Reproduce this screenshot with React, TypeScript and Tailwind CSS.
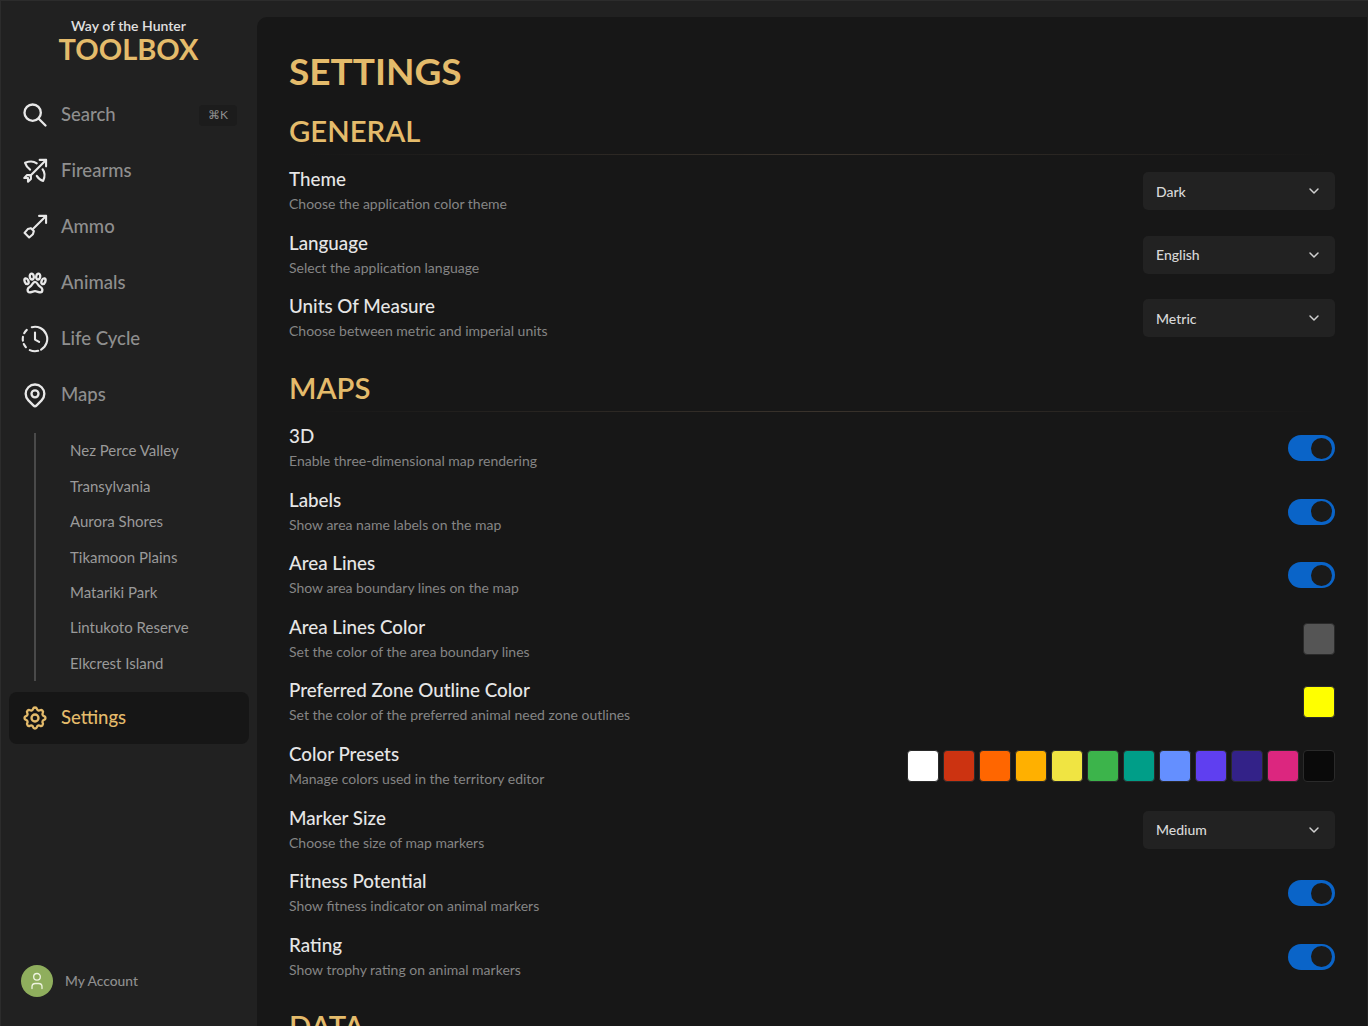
import { TbChevronDown, TbMapPin, TbPaw, TbSearch, TbSettings, TbUser } from "react-icons/tb";
import type { ReactNode } from "react";

const gold = "text-[#e4bb6b]";

function BowIcon() {
    return (
        <svg width="28" height="28" viewBox="0 0 24 24" fill="none" stroke="currentColor" strokeWidth="1.8" strokeLinecap="round" strokeLinejoin="round">
            <path d="M21.5 2.5L8 16" />
            <path d="M16 2.5h5.5v5.5" />
            <path d="M8.5 15.5H5.2L2.8 18h3.2v3.2l2.5 -2.4z" />
            <path d="M13.5 5.5C11 3.5 7 3.5 3.5 5c.6 2 2.2 4.200 4.300 5.800" />
            <path d="M18.500 10.500c2 2.500 2 6.500 .500 10c-2 -.500 -4.200 -2.200 -5.500 -4.300" />
        </svg>
    );
}

function ArrowIcon() {
    return (
        <svg width="28" height="28" viewBox="0 0 24 24" fill="none" stroke="currentColor" strokeWidth="1.8" strokeLinecap="round" strokeLinejoin="round">
            <path d="M21.500 2.500L10 14" />
            <path d="M15.500 2.500h6v6" />
            <path d="M8.500 13l2.500 2.500l-.8 2.700l-3.200 2.800l-4 -4l2.800 -3.200z" />
        </svg>
    );
}

function LifeCycleIcon() {
    return (
        <svg width="28" height="28" viewBox="0 0 24 24" fill="none" stroke="currentColor" strokeWidth="1.8" strokeLinecap="round" strokeLinejoin="round">
            <path d="M9.280 1.860A10.500 10.500 0 0 1 17.250 21.090" />
            <path d="M14.720 22.140A10.500 10.500 0 0 1 7.560 21.510" />
            <path d="M4.200 19.020A10.500 10.500 0 0 1 2.400 16.270" />
            <path d="M1.600 13.460A10.500 10.500 0 0 1 1.660 10.170" />
            <path d="M2.730 7.080A10.500 10.500 0 0 1 4.970 4.200" />
            <path d="M12 6.500v6l3.500 2" />
        </svg>
    );
}

function NavItem({ icon, label, right }: { icon: ReactNode; label: string; right?: ReactNode }) {
    return (
        <div className="ml-[9px] mr-2 mb-1 flex h-[52px] items-center px-3">
            <span className="flex w-[28px] justify-center text-[#e8e8e8]">{icon}</span>
            <span className="ml-3 text-[18.5px] font-medium text-[#8f8f8f]">{label}</span>
            {right}
        </div>
    );
}

function Section({ title }: { title: string }) {
    return (
        <div>
            <h2 className={`text-[29.3px] leading-[38px] font-semibold ${gold}`}>{title}</h2>
            <div className="mb-[4.4px] ml-5 mr-[10px] mt-1 h-px bg-gradient-to-r from-transparent via-[#3a332c] to-transparent" />
        </div>
    );
}

function Row({ title, desc, children }: { title: string; desc: string; children?: ReactNode }) {
    return (
        <div className="flex h-[63.6px] items-center justify-between">
            <div className="pb-px">
                <div className="text-[18.8px] leading-[25px] font-medium text-[#e6e6e6]">{title}</div>
                <div className="mt-[2px] text-[14px] leading-[22px] text-[#858585]">{desc}</div>
            </div>
            {children}
        </div>
    );
}

function Select({ value }: { value: string }) {
    return (
        <div className="flex h-[38px] w-[192px] items-center justify-between rounded-[5px] bg-[#222222] pl-[13px] pr-[13px] text-[14px] font-medium text-[#d8d8d8]">
            {value}
            <TbChevronDown size={16} strokeWidth={2.2} className="text-[#d0d0d0]" />
        </div>
    );
}

function Toggle() {
    return (
        <div className="flex h-[26px] w-[47px] items-center justify-end rounded-full bg-[#0a64c8] pr-[3px]">
            <div className="h-[21px] w-[21px] rounded-full bg-[#1a1a1a]" />
        </div>
    );
}

function Swatch({ className }: { className: string }) {
    return <div className={`h-[32px] w-[32px] rounded-[4px] border border-[#2a2a2a] ${className}`} />;
}

const maps = ["Nez Perce Valley", "Transylvania", "Aurora Shores", "Tikamoon Plains", "Matariki Park", "Lintukoto Reserve", "Elkcrest Island"];

const presets = ["bg-white", "bg-[#cc3311]", "bg-[#ff6600]", "bg-[#ffb000]", "bg-[#f0e442]", "bg-[#3cb44b]", "bg-[#009e88]", "bg-[#648fff]", "bg-[#5f3ff0]", "bg-[#332288]", "bg-[#dc267f]", "bg-[#0a0a0a]"];

export default function App() {
    return (
        <div className="flex h-[1026px] w-[1368px] overflow-hidden bg-[#212121] font-['Lato','Noto_Sans',sans-serif] shadow-[inset_1px_1px_0_#2c2c2c]">
            {/* sidebar */}
            <aside className="flex w-[257px] shrink-0 flex-col">
                <div className="pt-[18px] text-center">
                    <div className="text-[14px] leading-[16px] font-semibold text-[#e0e0e0]">Way of the Hunter</div>
                    <div className={`text-[29px] leading-[30px] font-bold ${gold}`}>TOOLBOX</div>
                </div>
                <div className="mt-[25px]">
                    <NavItem
                        icon={<TbSearch size={28} />}
                        label="Search"
                        right={<span className="ml-auto flex h-[21px] w-[38px] items-center justify-center rounded-[4px] bg-[#1c1c1c] text-[12px] text-[#8f8f8f]">⌘K</span>}
                    />
                    <NavItem icon={<BowIcon />} label="Firearms" />
                    <NavItem icon={<ArrowIcon />} label="Ammo" />
                    <NavItem icon={<TbPaw size={28} />} label="Animals" />
                    <NavItem icon={<LifeCycleIcon />} label="Life Cycle" />
                    <NavItem icon={<TbMapPin size={28} />} label="Maps" />
                </div>
                <div className="ml-[34px] mt-[8px] border-l-2 border-[#4a4a4a] pl-[34px]">
                    {maps.map((m) => (
                        <div key={m} className="flex h-[35.4px] items-center text-[15px] text-[#9a9a9a]">{m}</div>
                    ))}
                </div>
                <div className={`ml-[9px] mr-2 mt-[11px] flex h-[52px] items-center rounded-[8px] bg-[#161616] px-3 ${gold}`}>
                    <span className="flex w-[28px] justify-center"><TbSettings size={28} /></span>
                    <span className="ml-3 text-[18.5px] font-medium">Settings</span>
                </div>
                <div className="mb-[29px] mt-auto flex items-center pl-[21px]">
                    <div className="flex h-[32px] w-[32px] items-center justify-center rounded-full bg-[#8fae5d] text-[#eef3e0]">
                        <TbUser size={20} strokeWidth={1.6} />
                    </div>
                    <span className="ml-3 text-[13.8px] font-medium text-[#8f8f8f]">My Account</span>
                </div>
            </aside>

            {/* content */}
            <main className="mt-[17px] flex-1 overflow-hidden rounded-tl-[10px] border-r border-[#212121] bg-[#171717] pl-[32px] pr-[32px] pt-[31px]">
                <h1 className={`text-[37px] leading-[45px] font-bold ${gold}`}>SETTINGS</h1>
                <div className="mt-[19px]">
                    <Section title="GENERAL" />
                    <Row title="Theme" desc="Choose the application color theme"><Select value="Dark" /></Row>
                    <Row title="Language" desc="Select the application language"><Select value="English" /></Row>
                    <Row title="Units Of Measure" desc="Choose between metric and imperial units"><Select value="Metric" /></Row>
                </div>
                <div className="mt-[18.7px]">
                    <Section title="MAPS" />
                    <Row title="3D" desc="Enable three-dimensional map rendering"><Toggle /></Row>
                    <Row title="Labels" desc="Show area name labels on the map"><Toggle /></Row>
                    <Row title="Area Lines" desc="Show area boundary lines on the map"><Toggle /></Row>
                    <Row title="Area Lines Color" desc="Set the color of the area boundary lines"><Swatch className="bg-[#555555]" /></Row>
                    <Row title="Preferred Zone Outline Color" desc="Set the color of the preferred animal need zone outlines"><Swatch className="bg-[#ffff00]" /></Row>
                    <Row title="Color Presets" desc="Manage colors used in the territory editor">
                        <div className="flex gap-1">
                            {presets.map((c) => <Swatch key={c} className={c} />)}
                        </div>
                    </Row>
                    <Row title="Marker Size" desc="Choose the size of map markers"><Select value="Medium" /></Row>
                    <Row title="Fitness Potential" desc="Show fitness indicator on animal markers"><Toggle /></Row>
                    <Row title="Rating" desc="Show trophy rating on animal markers"><Toggle /></Row>
                </div>
                <div className="mt-[18px]">
                    <Section title="DATA" />
                </div>
            </main>
        </div>
    );
}
